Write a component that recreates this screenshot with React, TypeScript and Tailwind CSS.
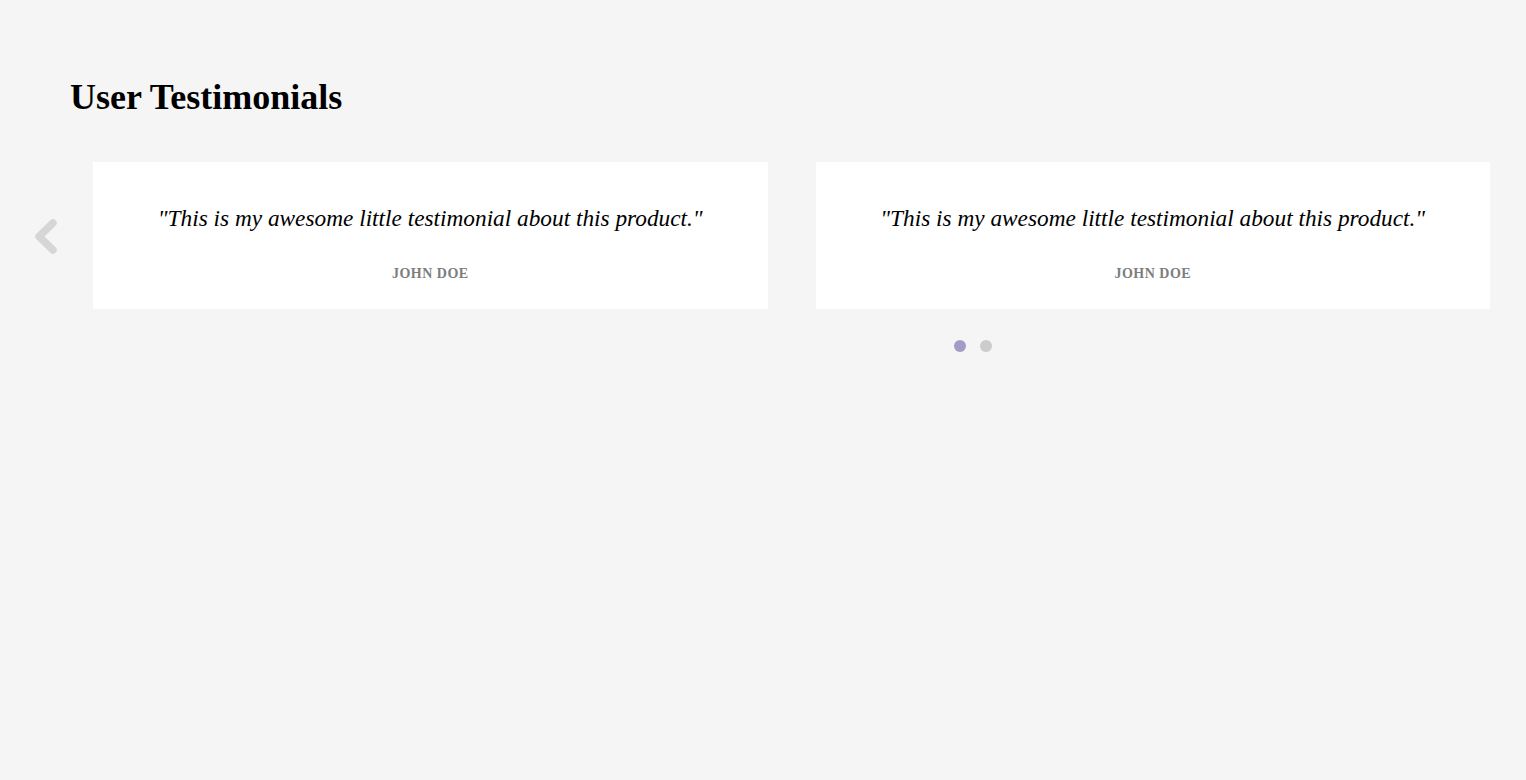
import React from 'react';

const testimonials = [
  { quote: '"This is my awesome little testimonial about this product."', author: 'John Doe' },
  { quote: '"This is my awesome little testimonial about this product."', author: 'John Doe' },
];

function ChevronLeft() {
  return (
    <svg width="26" height="36" viewBox="0 0 26 36" fill="none" aria-hidden="true">
      <path d="M20 5 L6 18.5 L20 32" stroke="#d6d6d6" strokeWidth="7.5" strokeLinecap="round" strokeLinejoin="round" />
    </svg>
  );
}

export default function App() {
  return (
    <div className="min-h-screen w-full bg-[#f5f5f5] font-['Liberation_Serif','DejaVu_Serif',serif]">
      <div className="pt-[77px]">
        <h1 className="pl-[70px] text-[36px] font-bold leading-[40px] text-black">User Testimonials</h1>

        <div className="mt-[45px] flex items-start pl-[33px] pr-[36px]">
          <button className="mt-[56px] mr-[34px] flex h-[36px] w-[26px] items-center justify-center" aria-label="Previous">
            <ChevronLeft />
          </button>
          <div className="flex flex-1 gap-[48px]">
            {testimonials.map((t, i) => (
              <div key={i} className="flex h-[147px] flex-1 flex-col items-center bg-white pt-[41px]">
                <p className="text-[23.3px] italic leading-[30px] text-black">{t.quote}</p>
                <p className="mt-[32px] text-[14px] font-bold uppercase leading-[18px] tracking-[0.5px] text-[#7d7d7d]">
                  {t.author}
                </p>
              </div>
            ))}
          </div>
        </div>

        <div className="mt-[31px] flex gap-[14px] pl-[954px]">
          <span className="h-[12px] w-[12px] rounded-full bg-[#a59bc9]" />
          <span className="h-[12px] w-[12px] rounded-full bg-[#cccccc]" />
        </div>
      </div>
    </div>
  );
}
